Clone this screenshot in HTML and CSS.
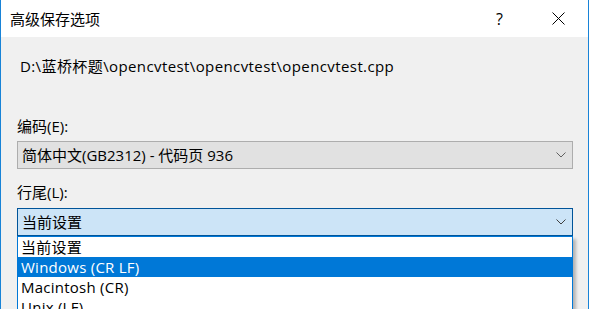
FILE: index.html
```html
<!DOCTYPE html>
<html lang="zh-CN">
<head>
    <meta charset="UTF-8">
    <title>高级保存选项</title>
    <link rel="stylesheet" href="styles.css">
</head>
<body>
    <div class="window">
        <div class="titlebar">
            <span class="title">高级保存选项</span>
            <div class="controls">
                <span class="help">?</span>
                <svg class="close" width="13" height="13" viewBox="0 0 13 13">
                    <path d="M0.5 0.5 L12.5 12.5 M12.5 0.5 L0.5 12.5" stroke="#000" stroke-width="1" fill="none"/>
                </svg>
            </div>
        </div>

        <div class="content">
            <p class="path">D:\蓝桥杯题\opencvtest\opencvtest\opencvtest.cpp</p>

            <label class="field-label">编码(E):</label>
            <div class="combo">
                <span>简体中文(GB2312) - 代码页 936</span>
                <svg class="chevron" width="10" height="6" viewBox="0 0 10 6">
                    <path d="M0.5 0.5 L5 5 L9.5 0.5" stroke="#606060" stroke-width="1" fill="none"/>
                </svg>
            </div>

            <label class="field-label second">行尾(L):</label>
            <div class="combo open">
                <span>当前设置</span>
                <svg class="chevron" width="10" height="6" viewBox="0 0 10 6">
                    <path d="M0.5 0.5 L5 5 L9.5 0.5" stroke="#404040" stroke-width="1" fill="none"/>
                </svg>
            </div>
            <ul class="list">
                <li>当前设置</li>
                <li class="selected">Windows (CR LF)</li>
                <li>Macintosh (CR)</li>
                <li>Unix (LF)</li>
            </ul>
        </div>
    </div>
</body>
</html>
```

FILE: styles.css
```css
/* ダイアログ全体 */
body {
    margin: 0;
    font-family: "Open Sans", "Noto Sans CJK SC", sans-serif;
    font-size: 15px;
    color: #000;
    background-color: #f0f0f0;
}

.window {
    width: 589px;
    height: 309px;
    box-sizing: border-box;
    border-left: 1px solid #1883d7;
    border-right: 1px solid #1883d7;
    background-color: #f0f0f0;
    overflow: hidden;
}

/* タイトルバー */
.titlebar {
    height: 37px;
    background-color: #fff;
    display: flex;
    align-items: center;
    justify-content: space-between;
    padding-left: 9px;
}

.title {
    line-height: 20px;
}

.controls {
    display: flex;
    align-items: center;
}

.help {
    font-size: 16px;
    line-height: 20px;
    margin-right: 49px;
    color: #000;
}

.close {
    display: block;
    margin-right: 23px;
}

/* 本体 */
.content {
    padding: 19px 15px 0 16px;
}

.path {
    margin: 0 0 40px 3px;
    line-height: 20px;
    letter-spacing: 0.4px;
}

.field-label {
    display: block;
    line-height: 20px;
    margin-bottom: 5px;
}

.field-label.second {
    margin-top: 13px;
    margin-bottom: 6px;
}

.combo {
    height: 28px;
    box-sizing: border-box;
    border: 1px solid #adadad;
    background-color: #e1e1e1;
    display: flex;
    align-items: center;
    justify-content: space-between;
    padding: 0 6px 0 4px;
    line-height: 20px;
}

.combo.open {
    border-color: #005499;
    background-color: #cce4f7;
}

.chevron {
    display: block;
}

/* ドロップダウンリスト */
.list {
    list-style: none;
    margin: 0;
    padding: 0;
    border: 1px solid #0078d7;
    background-color: #fff;
    box-shadow: 3px 3px 3px rgba(0, 0, 0, 0.25);
}

.list li {
    height: 20px;
    line-height: 20px;
    padding-left: 3px;
    letter-spacing: 0.25px;
}

.list li.selected {
    background-color: #0078d7;
    color: #fff;
}
```
